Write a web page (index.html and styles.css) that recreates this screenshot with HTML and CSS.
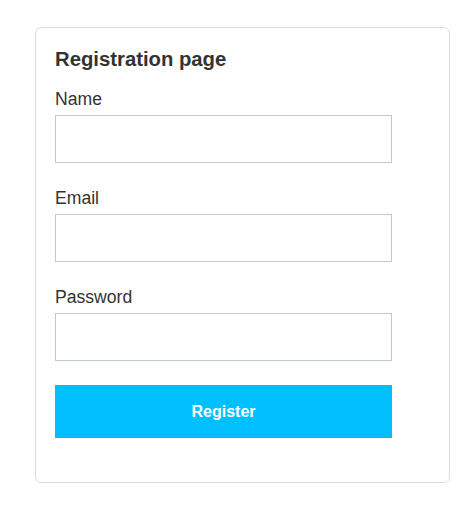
FILE: index.html
```html
<!DOCTYPE html>
<html lang="en">
<head>
<meta charset="utf-8">
<title>Registration page</title>
<link rel="stylesheet" href="styles.css">
</head>
<body>
<form class="card">
  <h1 class="title">Registration page</h1>
  <div class="field">
    <label class="label" for="name">Name</label>
    <input class="input" id="name" type="text">
  </div>
  <div class="field">
    <label class="label" for="email">Email</label>
    <input class="input" id="email" type="email">
  </div>
  <div class="field">
    <label class="label" for="password">Password</label>
    <input class="input" id="password" type="password">
  </div>
  <button class="btn" type="button">Register</button>
</form>
</body>
</html>
```
FILE: styles.css
```css
* { box-sizing: border-box; }
html, body { margin: 0; padding: 0; background: #fff; }
body {
  font-family: "Liberation Sans", Arial, sans-serif;
  color: #333;
  padding: 27px 0 0 35px;
}
.card {
  width: 415px;
  height: 456px;
  border: 1px solid #dcdcdc;
  border-radius: 6px;
  padding: 18px 19px 0 19px;
  display: flex;
  flex-direction: column;
}
.title {
  margin: 0 0 17px 0;
  font-size: 20.3px;
  line-height: 26px;
  font-weight: bold;
  color: #333;
}
.field {
  display: flex;
  flex-direction: column;
  margin-bottom: 25px;
}
.field:nth-of-type(3) { margin-bottom: 24px; }
.label {
  font-size: 17.6px;
  line-height: 20px;
  color: #333;
  margin-bottom: 6px;
}
.input {
  width: 337px;
  height: 48px;
  border: 1px solid #bfc7d5;
  border-radius: 0;
  margin: 0;
  padding: 0 10px;
  font: inherit;
  outline: none;
}
.btn {
  width: 337px;
  height: 53px;
  background: #00bfff;
  border: 1px solid #1fbfa6;
  border-radius: 0;
  color: #fff;
  font-family: "Liberation Sans", Arial, sans-serif;
  font-size: 16px;
  font-weight: bold;
  padding: 0;
  margin: 0;
}
```
